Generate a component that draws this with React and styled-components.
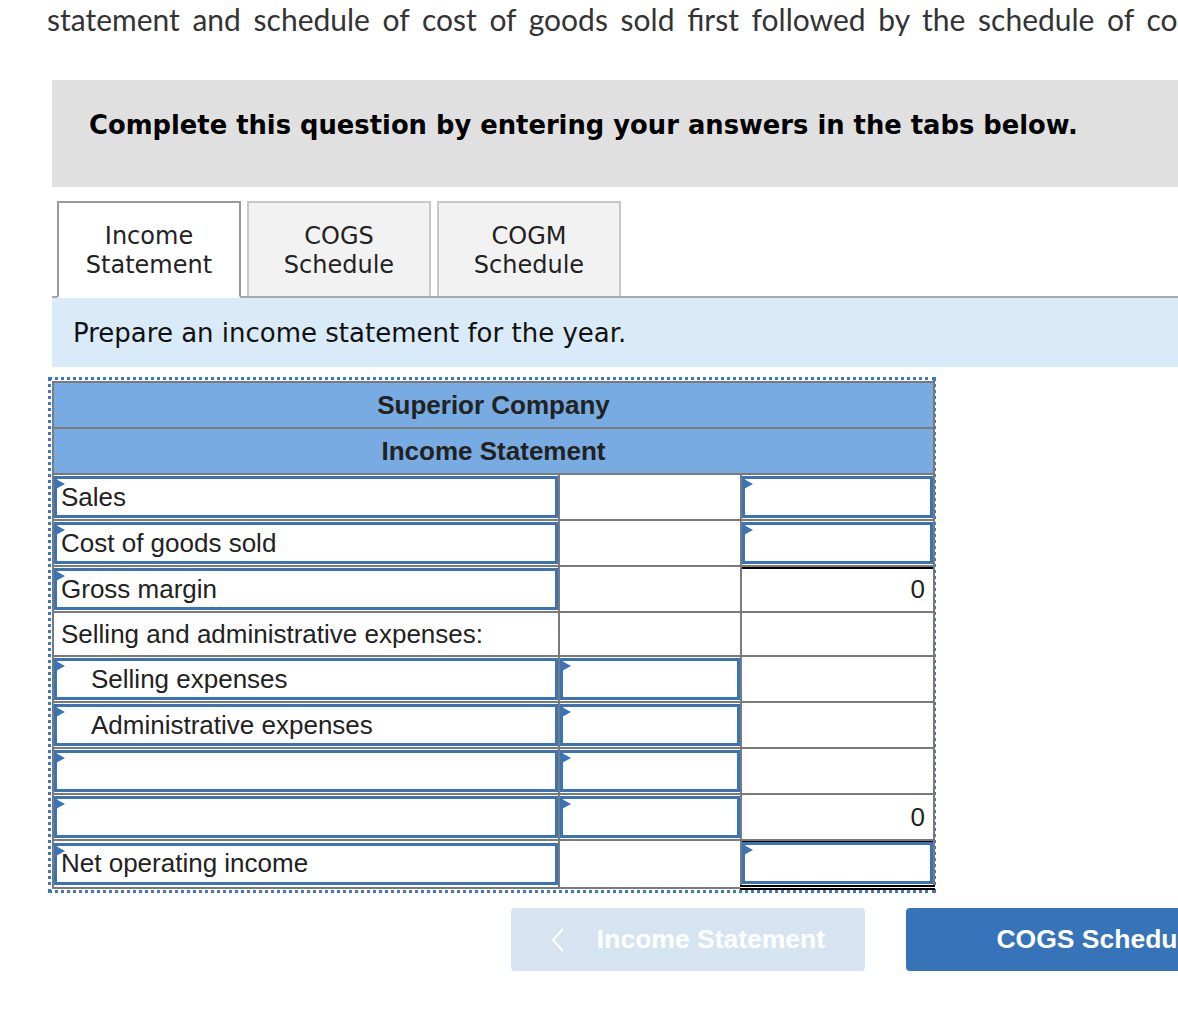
import React from 'react';
import styled, { createGlobalStyle } from 'styled-components';

const GlobalStyle = createGlobalStyle`
  html, body {
    margin: 0;
    padding: 0;
    background: #fff;
    overflow: hidden;
  }
`;

const rows = [
  { label: 'Sales', labelInput: true, mid: null, right: 'input' },
  { label: 'Cost of goods sold', labelInput: true, mid: null, right: 'input' },
  { label: 'Gross margin', labelInput: true, mid: null, right: 'value', value: '0', total: 'single' },
  { label: 'Selling and administrative expenses:', labelInput: false, mid: null, right: null },
  { label: 'Selling expenses', labelInput: true, indent: true, mid: 'input', right: null },
  { label: 'Administrative expenses', labelInput: true, indent: true, mid: 'input', right: null },
  { label: '', labelInput: true, mid: 'input', right: null },
  { label: '', labelInput: true, mid: 'input', right: 'value', value: '0' },
  { label: 'Net operating income', labelInput: true, mid: null, right: 'input', total: 'double' }
];

const tabs = [
  ['Income', 'Statement'],
  ['COGS', 'Schedule'],
  ['COGM', 'Schedule']
];

const App = () => {
  return (
    <Page>
      <GlobalStyle />
      <IntroLine>
        statement and schedule of cost of goods sold first followed by the schedule of cost of goods manufactured.
      </IntroLine>
      <Content>
        <Instructions>
          Complete this question by entering your answers in the tabs below.
        </Instructions>
        <TabBar>
          {tabs.map((t, i) => (
            <Tab key={i} active={i === 0}>
              {t[0]}
              <br />
              {t[1]}
            </Tab>
          ))}
        </TabBar>
        <Prompt>Prepare an income statement for the year.</Prompt>
        <SheetFrame>
          <Sheet>
            <tbody>
              <tr>
                <HeadCell colSpan={3}>Superior Company</HeadCell>
              </tr>
              <tr>
                <HeadCell colSpan={3}>Income Statement</HeadCell>
              </tr>
              {rows.map((r, i) => (
                <tr key={i}>
                  <LabelCell>
                    {r.labelInput ? (
                      <Field indent={r.indent}>{r.label}</Field>
                    ) : (
                      <PlainText>{r.label}</PlainText>
                    )}
                  </LabelCell>
                  <MidCell>{r.mid === 'input' && <Field />}</MidCell>
                  <AmountCell total={r.total}>
                    {r.right === 'input' && <Field />}
                    {r.right === 'value' && <Amount>{r.value}</Amount>}
                  </AmountCell>
                </tr>
              ))}
            </tbody>
          </Sheet>
        </SheetFrame>
        <ButtonRow>
          <NavButton disabled>
            <svg width="14" height="26" viewBox="0 0 14 26">
              <polyline points="12,2 2,13 12,24" fill="none" stroke="#fff" strokeWidth="2.2" />
            </svg>
            Income Statement
          </NavButton>
          <NavButton primary>
            COGS Schedule
            <svg width="14" height="26" viewBox="0 0 14 26">
              <polyline points="2,2 12,13 2,24" fill="none" stroke="#fff" strokeWidth="2.2" />
            </svg>
          </NavButton>
        </ButtonRow>
      </Content>
    </Page>
  );
};

export default App;

const Page = styled.div`
  width: 1178px;
  height: 1016px;
  overflow: hidden;
`;

const IntroLine = styled.div`
  margin: -2px 0 0 47px;
  font-family: Lato, 'Open Sans', sans-serif;
  font-size: 30px;
  line-height: 42px;
  word-spacing: 5px;
  color: #333;
  white-space: nowrap;
`;

const Content = styled.div`
  width: 1284px;
  margin: 40px 0 0 52px;
`;

const Instructions = styled.div`
  height: 107px;
  box-sizing: border-box;
  padding: 28px 0 0 37px;
  background: #e0e0e0;
  font-family: 'DejaVu Sans', Verdana, sans-serif;
  font-weight: bold;
  font-size: 25.8px;
  line-height: 34px;
  color: #000;
`;

const TabBar = styled.div`
  display: flex;
  align-items: flex-start;
  gap: 6px;
  margin-top: 14px;
  padding-left: 5px;
  border-bottom: 2px solid #a8a8a8;
`;

const Tab = styled.div`
  width: 184px;
  height: ${p => (p.active ? '97px' : '95px')};
  box-sizing: border-box;
  display: flex;
  flex-direction: column;
  justify-content: center;
  align-items: center;
  text-align: center;
  font-family: 'DejaVu Sans', Verdana, sans-serif;
  font-size: 24px;
  line-height: 29px;
  color: #222;
  background: ${p => (p.active ? '#fff' : '#f2f2f2')};
  border: 2px solid ${p => (p.active ? '#9a9a9a' : '#c8c8c8')};
  border-bottom: ${p => (p.active ? '2px solid #fff' : 'none')};
  margin-bottom: ${p => (p.active ? '-2px' : '0')};
  padding-top: 2px;
`;

const Prompt = styled.div`
  height: 69px;
  box-sizing: border-box;
  padding-left: 21px;
  display: flex;
  align-items: center;
  background: #d9eaf8;
  font-family: 'DejaVu Sans', Verdana, sans-serif;
  font-size: 26px;
  color: #111;
`;

const SheetFrame = styled.div`
  width: 888px;
  box-sizing: border-box;
  margin: 10px 0 0 -4px;
  border: 3px dotted #3b78c0;
  padding: 1px 0 0 1px;
`;

const Sheet = styled.table`
  width: 883px;
  border-collapse: collapse;
  font-family: 'Liberation Sans', Arial, sans-serif;
  font-size: 26px;
  color: #222;
  td {
    padding: 0;
    border: 2px solid #7a7a7a;
    height: 44px;
    box-sizing: border-box;
  }
`;

const HeadCell = styled.td`
  background: #77abe1;
  text-align: center;
  font-weight: bold;
  && {
    height: 46px;
  }
`;

const LabelCell = styled.td`
  width: 506px;
`;

const MidCell = styled.td`
  width: 182px;
`;

const AmountCell = styled.td`
  box-shadow: ${p => (p.total ? 'inset 0 2px 0 #000' : 'none')};
  && {
    ${p => (p.total === 'double' ? 'border-bottom: 5px double #000;' : '')}
  }
`;

const Field = styled.div`
  position: relative;
  height: 42px;
  box-sizing: border-box;
  margin: 1px 0;
  border: 3px solid #3a74b7;
  padding-left: ${p => (p.indent ? '34px' : '4px')};
  display: flex;
  align-items: center;
  &::before {
    content: '';
    position: absolute;
    left: -3px;
    top: -1px;
    border-left: 11px solid #3a74b7;
    border-top: 6px solid transparent;
    border-bottom: 6px solid transparent;
  }
`;

const PlainText = styled.div`
  padding-left: 7px;
`;

const Amount = styled.div`
  text-align: right;
  padding-right: 8px;
`;

const ButtonRow = styled.div`
  display: flex;
  justify-content: flex-end;
  gap: 41px;
  margin-top: 15px;
`;

const NavButton = styled.button`
  height: 63px;
  width: ${p => (p.primary ? '430px' : '354px')};
  display: flex;
  align-items: center;
  justify-content: center;
  gap: 32px;
  border: none;
  border-radius: 4px;
  background: ${p => (p.primary ? '#3673b8' : '#d6e4f2')};
  color: #fff;
  font-family: 'Liberation Sans', Arial, sans-serif;
  font-weight: bold;
  font-size: 26.5px;
  padding: 0;
`;
